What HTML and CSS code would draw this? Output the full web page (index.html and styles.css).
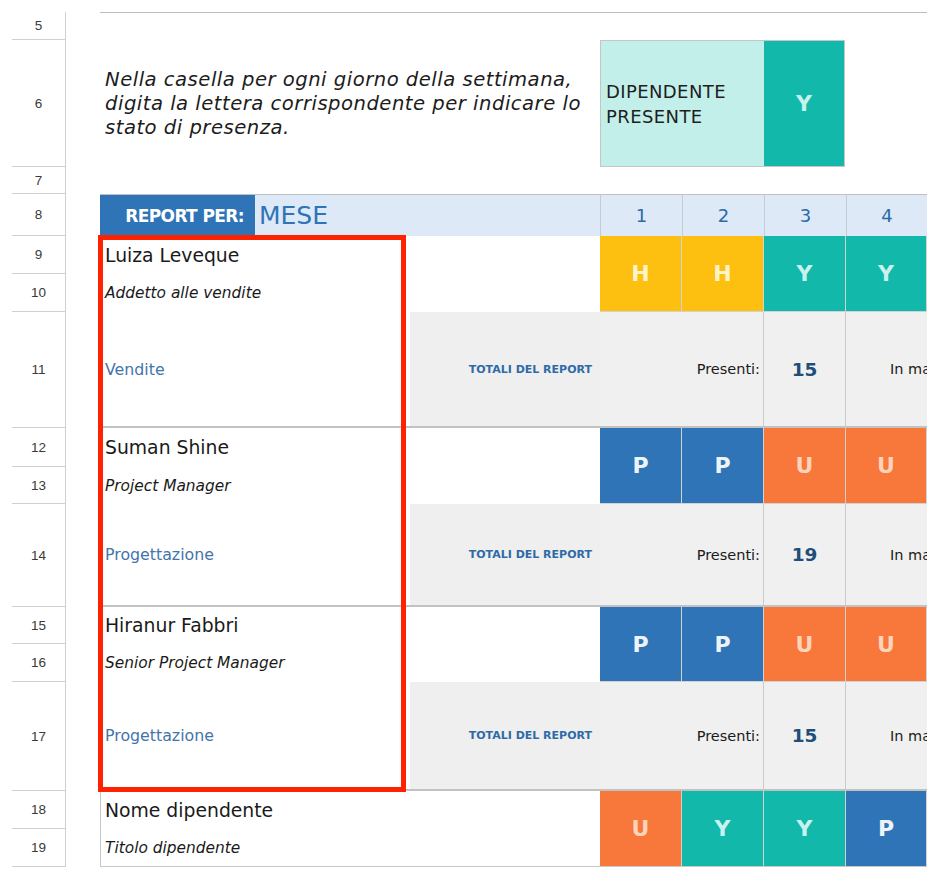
FILE: index.html
```html
<!DOCTYPE html>
<html lang="it">
<head>
<meta charset="utf-8">
<title>Report presenze dipendenti</title>
<link rel="stylesheet" href="styles.css">
</head>
<body>
<div class="sheet">
  <div class="rn y1">5</div>
  <div class="rn y2">6</div>
  <div class="rn y3">7</div>
  <div class="rn y4">8</div>
  <div class="rn y5">9</div>
  <div class="rn y6">10</div>
  <div class="rn y7">11</div>
  <div class="rn y8">12</div>
  <div class="rn y9">13</div>
  <div class="rn y10">14</div>
  <div class="rn y11">15</div>
  <div class="rn y12">16</div>
  <div class="rn y13">17</div>
  <div class="rn y14">18</div>
  <div class="rn y15">19</div>

  <div class="topline y1"></div>

  <div class="instr y2">Nella casella per ogni giorno della settimana,<br>digita la lettera corrispondente per indicare lo<br>stato di presenza.</div>
  <div class="legend-label y2">DIPENDENTE<br>PRESENTE</div>
  <div class="legend-key y2">Y</div>

  <div class="hdr-label y4">REPORT PER:</div>
  <div class="hdr-period y4">MESE</div>
  <div class="day d1 y4">1</div>
  <div class="day d2 y4">2</div>
  <div class="day d3 y4">3</div>
  <div class="day d4 y4">4</div>

  <!-- Employee 1 -->
  <div class="name y5">Luiza Leveque</div>
  <div class="title y6">Addetto alle vendite</div>
  <div class="dept y7">Vendite</div>
  <div class="tot-label y7">TOTALI DEL REPORT</div>
  <div class="mark d1 m5 hol">H</div>
  <div class="mark d2 m5 hol">H</div>
  <div class="mark d3 m5 pres">Y</div>
  <div class="mark d4 m5 pres">Y</div>
  <div class="tot-present y7">Presenti:</div>
  <div class="tot-count y7">15</div>
  <div class="tot-other y7">In malattia:</div>

  <!-- Employee 2 -->
  <div class="name y8">Suman Shine</div>
  <div class="title y9">Project Manager</div>
  <div class="dept y10">Progettazione</div>
  <div class="tot-label y10">TOTALI DEL REPORT</div>
  <div class="mark d1 m8 pers">P</div>
  <div class="mark d2 m8 pers">P</div>
  <div class="mark d3 m8 unp">U</div>
  <div class="mark d4 m8 unp">U</div>
  <div class="tot-present y10">Presenti:</div>
  <div class="tot-count y10">19</div>
  <div class="tot-other y10">In malattia:</div>

  <!-- Employee 3 -->
  <div class="name y11">Hiranur Fabbri</div>
  <div class="title y12">Senior Project Manager</div>
  <div class="dept y13">Progettazione</div>
  <div class="tot-label y13">TOTALI DEL REPORT</div>
  <div class="mark d1 m11 pers">P</div>
  <div class="mark d2 m11 pers">P</div>
  <div class="mark d3 m11 unp">U</div>
  <div class="mark d4 m11 unp">U</div>
  <div class="tot-present y13">Presenti:</div>
  <div class="tot-count y13">15</div>
  <div class="tot-other y13">In malattia:</div>

  <!-- Employee 4 -->
  <div class="name y14">Nome dipendente</div>
  <div class="title last y15">Titolo dipendente</div>
  <div class="mark d1 m14 last unp">U</div>
  <div class="mark d2 m14 last pres">Y</div>
  <div class="mark d3 m14 last pres">Y</div>
  <div class="mark d4 m14 last pers">P</div>

  <div class="highlight"></div>
</div>
</body>
</html>
```

FILE: styles.css
```css
html, body {
  margin: 0;
  padding: 0;
  background: #ffffff;
}

body {
  font-family: "DejaVu Sans", "Liberation Sans", sans-serif;
  color: #1a1a1a;
  width: 937px;
  height: 878px;
  overflow: hidden;
}

.sheet {
  position: relative;
  display: grid;
  padding: 12px 0 0 12px;
  grid-template-columns: 54px 34px 155px 155px 190px 82px 82px 82px 81px;
  grid-template-rows: 28px 127px 27px 42px 38px 38px 116px 39px 37px 103px 37px 38px 109px 38px 38px;
}

/* row placement */
.y1 { grid-row: 1; }
.y2 { grid-row: 2; }
.y3 { grid-row: 3; }
.y4 { grid-row: 4; }
.y5 { grid-row: 5; }
.y6 { grid-row: 6; }
.y7 { grid-row: 7; }
.y8 { grid-row: 8; }
.y9 { grid-row: 9; }
.y10 { grid-row: 10; }
.y11 { grid-row: 11; }
.y12 { grid-row: 12; }
.y13 { grid-row: 13; }
.y14 { grid-row: 14; }
.y15 { grid-row: 15; }
.m5 { grid-row: 5 / 7; }
.m8 { grid-row: 8 / 10; }
.m11 { grid-row: 11 / 13; }
.m14 { grid-row: 14 / 16; }

/* row numbers */
.rn {
  grid-column: 1;
  display: flex;
  align-items: center;
  justify-content: center;
  font-family: "Liberation Sans", Arial, sans-serif;
  font-size: 13.5px;
  color: #3a3a3a;
  border-right: 1px solid #cfcfcf;
  border-bottom: 1px solid #cfcfcf;
  box-sizing: border-box;
}

.topline {
  grid-column: 3 / 10;
  border-top: 1px solid #bdbdbd;
}

/* instructions + legend */
.instr {
  grid-column: 3 / 6;
  align-self: center;
  padding-left: 5px;
  font-style: italic;
  font-size: 19.6px;
  letter-spacing: 0.5px;
  line-height: 24px;
  white-space: nowrap;
  color: #1c1c1c;
}

.legend-label {
  grid-column: 6 / 8;
  background: #c3efea;
  border: 1px solid #c6c6c6;
  border-right: none;
  display: flex;
  align-items: center;
  padding-left: 5px;
  font-size: 18px;
  letter-spacing: 0.4px;
  line-height: 25px;
  color: #1e1e1e;
  box-sizing: border-box;
}

.legend-key {
  grid-column: 8;
  margin-right: 1px;
  background: #12b8aa;
  border: 1px solid #c6c6c6;
  border-left: none;
  display: flex;
  align-items: center;
  justify-content: center;
  font-weight: bold;
  font-size: 22px;
  color: #c8f2ed;
  box-sizing: border-box;
}

/* header row */
.hdr-label {
  grid-column: 3;
  background: #2e74b6;
  color: #ffffff;
  font-weight: bold;
  font-size: 17px;
  letter-spacing: -0.6px;
  display: flex;
  align-items: center;
  justify-content: flex-end;
  padding-right: 11px;
  border-top: 1px solid #c0c0c0;
  box-sizing: border-box;
}

.hdr-period {
  grid-column: 4 / 6;
  background: #dde9f6;
  color: #2e74b6;
  font-size: 25px;
  display: flex;
  align-items: center;
  padding-left: 4px;
  border-top: 1px solid #c0c0c0;
  box-sizing: border-box;
}

.day {
  background: #dde9f6;
  color: #2e6aa8;
  font-size: 18px;
  display: flex;
  align-items: center;
  justify-content: center;
  border-top: 1px solid #c0c0c0;
  border-left: 1px solid #c4ccd6;
  box-sizing: border-box;
}

.d1 { grid-column: 6; }
.d2 { grid-column: 7; }
.d3 { grid-column: 8; }
.d4 { grid-column: 9; }

/* employee blocks */
.name {
  grid-column: 3 / 6;
  display: flex;
  align-items: center;
  padding-left: 4px;
  font-size: 18.8px;
  color: #1a1a1a;
  border-left: 1px solid #c8c8c8;
}

.title {
  grid-column: 3 / 6;
  display: flex;
  align-items: center;
  padding-left: 4px;
  font-style: italic;
  font-size: 15.4px;
  color: #1a1a1a;
  border-left: 1px solid #c8c8c8;
}

.title.last {
  border-bottom: 1px solid #c8c8c8;
}

.dept {
  grid-column: 3 / 5;
  display: flex;
  align-items: center;
  padding-left: 4px;
  font-size: 15.8px;
  color: #4474aa;
  border-left: 1px solid #c8c8c8;
  border-bottom: 2px solid #c2c2c2;
}

.tot-label {
  grid-column: 5;
  background: #efefef;
  display: flex;
  align-items: center;
  justify-content: flex-end;
  padding-right: 8px;
  font-weight: bold;
  font-size: 11px;
  color: #2e6aa8;
  border-bottom: 2px solid #c2c2c2;
}

.mark {
  display: flex;
  align-items: center;
  justify-content: center;
  font-weight: bold;
  font-size: 22px;
  border-right: 1px solid #d2d2d2;
  border-bottom: 1px solid #d2d2d2;
  box-sizing: border-box;
}

.mark.last {
  border-bottom: 1px solid #c8c8c8;
}

.hol { background: #fdbf10; color: #fff4c8; }
.pres { background: #12b8aa; color: #c8f2ed; }
.pers { background: #2e74b6; color: #eef3fa; }
.unp { background: #f8773b; color: #fcd3bb; }

.tot-present {
  grid-column: 6 / 8;
  background: #f0f0f0;
  display: flex;
  align-items: center;
  justify-content: flex-end;
  padding-right: 3px;
  font-size: 14.5px;
  color: #1a1a1a;
  border-right: 1px solid #cacaca;
  border-bottom: 2px solid #c2c2c2;
}

.tot-count {
  grid-column: 8;
  background: #f0f0f0;
  display: flex;
  align-items: center;
  justify-content: center;
  font-weight: bold;
  font-size: 18.5px;
  color: #1f4e79;
  border-right: 1px solid #cacaca;
  border-bottom: 2px solid #c2c2c2;
}

.tot-other {
  grid-column: 9;
  background: #f0f0f0;
  display: flex;
  align-items: center;
  padding-left: 44px;
  font-size: 14.5px;
  color: #1a1a1a;
  white-space: nowrap;
  overflow: hidden;
  border-bottom: 2px solid #c2c2c2;
}

/* highlight overlay annotation */
.highlight {
  position: absolute;
  left: 98px;
  top: 235px;
  width: 308px;
  height: 557px;
  border: 5px solid #ff2200;
  box-sizing: border-box;
  pointer-events: none;
}
```
